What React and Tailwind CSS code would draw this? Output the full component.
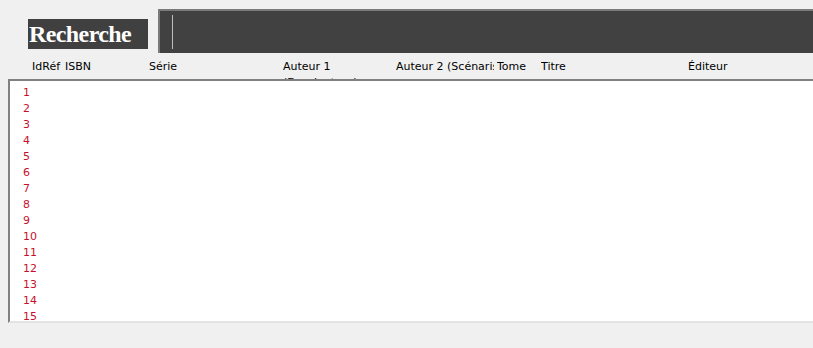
import React from "react";

const columns = [
  { label: "IdRéf", w: "w-[33px]", wrap: false },
  { label: "ISBN", w: "w-[84px]", wrap: false },
  { label: "Série", w: "w-[134px]", wrap: false },
  { label: "Auteur 1 (Dessinateur)", w: "w-[113px]", wrap: true },
  { label: "Auteur 2 (Scénariste)", w: "w-[98px] mr-[3px]", wrap: false },
  { label: "Tome", w: "w-[44px]", wrap: false },
  { label: "Titre", w: "w-[147px]", wrap: false },
  { label: "Éditeur", w: "w-[120px]", wrap: false },
];

const rows = Array.from({ length: 15 }, (_, i) => i + 1);

const App = () => {
  return (
    <div className="w-[813px] h-[348px] overflow-hidden bg-[#f0f0f0] font-['DejaVu_Sans',sans-serif] text-[11px] text-black">
      {/* Search bar */}
      <div className="flex pt-[9px] pl-[28px]">
        <div className="mt-[10px] h-[30px] w-[120px] bg-[#404040] flex items-center pl-[1px]">
          <span className="font-['Liberation_Serif',serif] font-bold text-[24px] leading-none tracking-[-0.6px] text-white">
            Recherche
          </span>
        </div>
        <div className="ml-[10px] h-[44px] flex-1 border-t-2 border-l-2 border-[#7a7a7a] bg-[#414141] flex items-center -mr-[4px]">
          <div className="ml-[12px] h-[34px] w-px bg-[#bdbdbd]" />
        </div>
      </div>

      {/* Column headers */}
      <div className="flex h-[26px] overflow-hidden pl-[32px] pt-[6px] leading-[16px]">
        {columns.map((c) => (
          <div
            key={c.label}
            className={`${c.w} shrink-0 overflow-hidden ${c.wrap ? "" : "whitespace-nowrap"}`}
          >
            {c.label}
          </div>
        ))}
      </div>

      {/* List */}
      <div className="ml-[8px] h-[244px] border-t-2 border-l-2 border-b-2 border-t-[#808080] border-l-[#808080] border-b-[#e3e3e3] bg-white pl-[13px] pt-[4px]">
        {rows.map((n) => (
          <div key={n} className="h-[16px] leading-[16px] text-[#c8102e]">
            {n}
          </div>
        ))}
      </div>
    </div>
  );
};

export default App;
